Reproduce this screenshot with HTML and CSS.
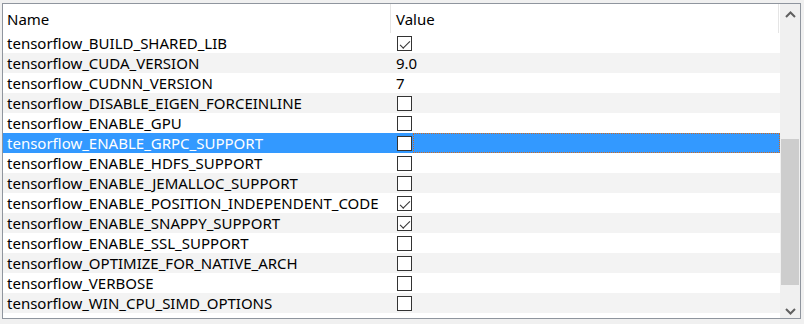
FILE: index.html
```html
<!DOCTYPE html>
<html lang="en">
<head>
    <meta charset="UTF-8">
    <title>CMake Cache</title>
    <link rel="stylesheet" href="styles.css">
</head>
<body>
    <div class="tree">
        <div class="list">
            <div class="header">
                <div class="hcell name-col">Name</div>
                <div class="hcell value-col">Value</div>
            </div>

            <div class="row">
                <div class="cell name-col">tensorflow_BUILD_SHARED_LIB</div>
                <div class="cell value-col"><span class="check checked"></span></div>
            </div>
            <div class="row">
                <div class="cell name-col">tensorflow_CUDA_VERSION</div>
                <div class="cell value-col">9.0</div>
            </div>
            <div class="row">
                <div class="cell name-col">tensorflow_CUDNN_VERSION</div>
                <div class="cell value-col">7</div>
            </div>
            <div class="row">
                <div class="cell name-col">tensorflow_DISABLE_EIGEN_FORCEINLINE</div>
                <div class="cell value-col"><span class="check"></span></div>
            </div>
            <div class="row">
                <div class="cell name-col">tensorflow_ENABLE_GPU</div>
                <div class="cell value-col"><span class="check"></span></div>
            </div>
            <div class="row selected">
                <div class="cell name-col">tensorflow_ENABLE_GRPC_SUPPORT</div>
                <div class="cell value-col"><span class="check"></span><span class="focus"></span></div>
            </div>
            <div class="row">
                <div class="cell name-col">tensorflow_ENABLE_HDFS_SUPPORT</div>
                <div class="cell value-col"><span class="check"></span></div>
            </div>
            <div class="row">
                <div class="cell name-col">tensorflow_ENABLE_JEMALLOC_SUPPORT</div>
                <div class="cell value-col"><span class="check"></span></div>
            </div>
            <div class="row">
                <div class="cell name-col">tensorflow_ENABLE_POSITION_INDEPENDENT_CODE</div>
                <div class="cell value-col"><span class="check checked"></span></div>
            </div>
            <div class="row">
                <div class="cell name-col">tensorflow_ENABLE_SNAPPY_SUPPORT</div>
                <div class="cell value-col"><span class="check checked"></span></div>
            </div>
            <div class="row">
                <div class="cell name-col">tensorflow_ENABLE_SSL_SUPPORT</div>
                <div class="cell value-col"><span class="check"></span></div>
            </div>
            <div class="row">
                <div class="cell name-col">tensorflow_OPTIMIZE_FOR_NATIVE_ARCH</div>
                <div class="cell value-col"><span class="check"></span></div>
            </div>
            <div class="row">
                <div class="cell name-col">tensorflow_VERBOSE</div>
                <div class="cell value-col"><span class="check"></span></div>
            </div>
            <div class="row">
                <div class="cell name-col">tensorflow_WIN_CPU_SIMD_OPTIONS</div>
                <div class="cell value-col"><span class="check"></span></div>
            </div>
        </div>

        <div class="scrollbar">
            <div class="arrow">
                <svg width="11" height="7" viewBox="0 0 11 7"><path d="M1 6 L5.5 1.5 L10 6" fill="none" stroke="#606060" stroke-width="2"/></svg>
            </div>
            <div class="track">
                <div class="thumb"></div>
            </div>
            <div class="arrow">
                <svg width="11" height="7" viewBox="0 0 11 7"><path d="M1 1 L5.5 5.5 L10 1" fill="none" stroke="#606060" stroke-width="2"/></svg>
            </div>
        </div>
    </div>
</body>
</html>
```

FILE: styles.css
```css
*{
  margin: 0;
  padding: 0;
  box-sizing: border-box;
}

body{
  background-color: #f0f0f0;
  font-family: "Noto Sans", "Open Sans", sans-serif;
  font-size: 15px;
  color: #000;
  padding: 3px 0 0 2px;
}

.tree{
  display: flex;
  width: 799px;
  height: 316px;
  border: 1px solid #8f959e;
  background-color: #fff;
}

.list{
  width: 777px;
  display: flex;
  flex-direction: column;
}

.header{
  display: flex;
  height: 29px;
  background-color: #fff;
}

.hcell{
  display: flex;
  align-items: center;
  padding-top: 1px;
  border-right: 1px solid #e5e5e5;
}

.header .name-col{
  width: 388px;
  padding-left: 4px;
}

.header .value-col{
  width: 388px;
  padding-left: 5px;
}

.row{
  display: flex;
  height: 20px;
  line-height: 20px;
}

.row:nth-child(odd){
  background-color: #f3f3f3;
}

.cell{
  white-space: nowrap;
}

.row .name-col{
  width: 388px;
  padding-left: 4px;
}

.row .value-col{
  flex: 1;
  display: flex;
  align-items: center;
  padding-left: 5px;
}

.row.selected{
  background-color: #3399ff;
  color: #fff;
}

.check{
  width: 15px;
  height: 15px;
  margin-left: 1px;
  border: 1px solid #333;
  background-color: #fff;
  position: relative;
}

.check.checked::after{
  content: "";
  position: absolute;
  left: 2px;
  top: 1px;
  width: 9px;
  height: 4px;
  border-left: 1.5px solid #333;
  border-bottom: 1.5px solid #333;
  transform: translate(0, 3px) rotate(-45deg);
}

.focus{
  flex: 1;
  height: 20px;
  margin-left: 1px;
  border: 1px dotted #d2691e;
}

.scrollbar{
  width: 20px;
  display: flex;
  flex-direction: column;
  background-color: #f0f0f0;
}

.arrow{
  height: 17px;
  display: flex;
  align-items: center;
  justify-content: center;
  padding-top: 3px;
}

.track{
  flex: 1;
  display: flex;
  flex-direction: column;
  justify-content: flex-end;
  padding: 118px 1px 16px 1px;
}

.thumb{
  flex: 1;
  background-color: #cdcdcd;
}
```
